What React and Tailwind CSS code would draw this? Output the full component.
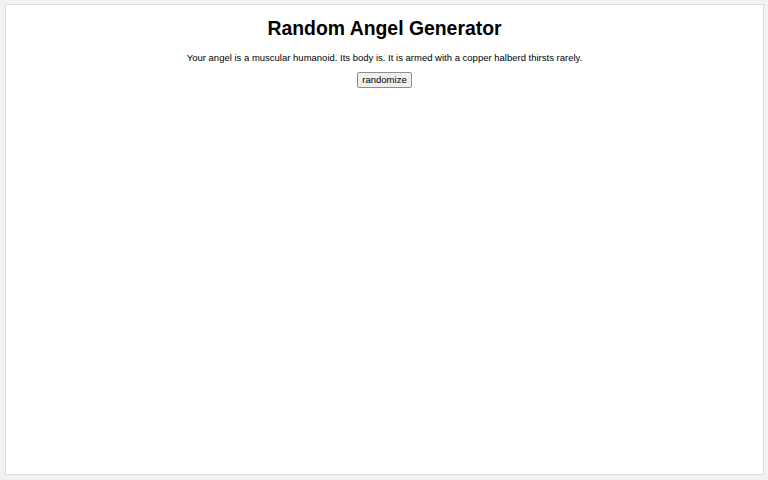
export default function App() {
  return (
    <div className="h-[480px] w-[768px] bg-[#f2f2f2] pt-[4px] pb-[5px] pl-[5px] pr-[4px] font-['Liberation_Sans',Arial,sans-serif]">
      <div className="flex h-full flex-col items-center border border-[#dcdcdc] bg-white text-black">
        <h1 className="mt-[12px] text-[19.4px] font-bold leading-[23px]">Random Angel Generator</h1>
        <p className="mt-[12px] text-[9.5px] leading-[11px]">
          Your angel is a muscular humanoid. Its body is. It is armed with a copper halberd thirsts rarely.
        </p>
        <button className="mt-[9px] rounded-[2px] border border-[#8f8f8f] bg-[#efefef] px-[4px] py-[1px] text-[9.5px] leading-[12px]">
          randomize
        </button>
      </div>
    </div>
  );
}
